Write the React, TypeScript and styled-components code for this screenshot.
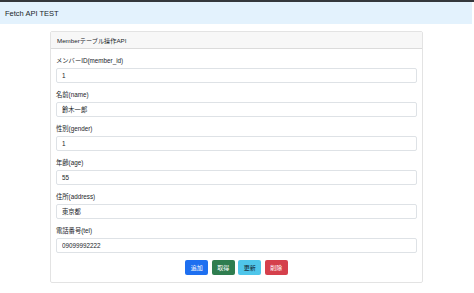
import React, { useState } from "react";
import styled, { createGlobalStyle } from "styled-components";

const GlobalStyle = createGlobalStyle`
  body {
    margin: 0;
    background: #fff;
    color: #212529;
    font-family: "Liberation Sans", "Noto Sans CJK JP", sans-serif;
  }
`;

const TopEdge = styled.div`
  height: 2px;
  background: #34383c;
`;

const Navbar = styled.nav`
  height: 22px;
  margin-right: 2px;
  background: #e3f2fd;
  display: flex;
  align-items: center;
  padding-left: 5px;
`;

const Brand = styled.span`
  font-size: 7.5px;
  color: #212529;
`;

const Container = styled.main`
  padding: 7px 51px 0 50px;
`;

const Card = styled.section`
  border: 1px solid rgba(0, 0, 0, 0.11);
  border-radius: 2px;
  overflow: hidden;
`;

const CardHeader = styled.header`
  height: 16px;
  display: flex;
  align-items: center;
  padding-left: 6px;
  font-size: 6.2px;
  background: #f7f7f7;
  border-bottom: 1px solid rgba(0, 0, 0, 0.11);
`;

const CardBody = styled.div`
  padding: 7px 5px 7px 5px;
`;

const Group = styled.div`
  margin-bottom: 7px;
`;

const Label = styled.label`
  display: block;
  font-size: 6.3px;
  line-height: 9px;
  margin-bottom: 3px;
`;

const Input = styled.input`
  display: block;
  box-sizing: border-box;
  width: 100%;
  height: 15px;
  padding: 0 5px;
  font-family: inherit;
  font-size: 6.3px;
  color: #212529;
  border: 1px solid #dee2e6;
  border-radius: 2px;
  outline: none;
  background: #fff;
`;

const Actions = styled.div`
  display: flex;
  justify-content: center;
  gap: 3.5px;
`;

const variants: Record<string, { bg: string; fg: string }> = {
  primary: { bg: "#1e6ff0", fg: "#fff" },
  success: { bg: "#2f7d4f", fg: "#fff" },
  info: { bg: "#4fc6ea", fg: "#10202a" },
  danger: { bg: "#d5404c", fg: "#fff" },
};

const Button = styled.button<{ $variant: string }>`
  width: 23px;
  height: 15px;
  padding: 0;
  border: none;
  border-radius: 2px;
  font-family: inherit;
  font-size: 6px;
  background: ${(p) => variants[p.$variant].bg};
  color: ${(p) => variants[p.$variant].fg};
`;

const fields = [
  { key: "member_id", label: "メンバーID(member_id)", value: "1" },
  { key: "name", label: "名前(name)", value: "鈴木一郎" },
  { key: "gender", label: "性別(gender)", value: "1" },
  { key: "age", label: "年齢(age)", value: "55" },
  { key: "address", label: "住所(address)", value: "東京都" },
  { key: "tel", label: "電話番号(tel)", value: "09099992222" },
];

export default function App() {
  const [form, setForm] = useState<Record<string, string>>(
    Object.fromEntries(fields.map((f) => [f.key, f.value]))
  );

  return (
    <>
      <GlobalStyle />
      <TopEdge />
      <Navbar>
        <Brand>Fetch API TEST</Brand>
      </Navbar>
      <Container>
        <Card>
          <CardHeader>Memberテーブル操作API</CardHeader>
          <CardBody>
            {fields.map((f) => (
              <Group key={f.key}>
                <Label htmlFor={f.key}>{f.label}</Label>
                <Input
                  id={f.key}
                  value={form[f.key]}
                  onChange={(e) => setForm({ ...form, [f.key]: e.target.value })}
                />
              </Group>
            ))}
            <Actions>
              <Button $variant="primary">追加</Button>
              <Button $variant="success">取得</Button>
              <Button $variant="info">更新</Button>
              <Button $variant="danger">削除</Button>
            </Actions>
          </CardBody>
        </Card>
      </Container>
    </>
  );
}
